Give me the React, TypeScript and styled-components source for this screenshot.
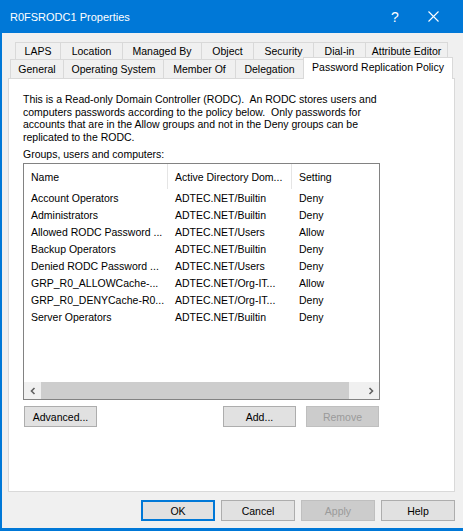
import styled, { createGlobalStyle } from 'styled-components';

const GlobalStyle = createGlobalStyle`
  html, body {
    margin: 0;
    padding: 0;
    background: #f0f0f0;
  }
  body {
    font-family: 'Liberation Sans', Arial, sans-serif;
    font-size: 10.5px;
    color: #000;
  }
`;

const Window = styled.div`
  box-sizing: border-box;
  width: 463px;
  height: 531px;
  display: flex;
  flex-direction: column;
  border-left: 2px solid #0078d7;
  border-bottom: 3px solid #0078d7;
  background: #f0f0f0;
  overflow: hidden;
`;

const TitleBar = styled.div`
  height: 33px;
  flex: none;
  display: flex;
  align-items: center;
  background: #0078d7;
  color: #fff;
  padding: 0 11px 0 8px;
  margin-left: -2px;
`;

const TitleText = styled.span`
  flex: 1;
  font-size: 11px;
  padding-left: 2px;
`;

const TitleButton = styled.div`
  width: 38px;
  height: 33px;
  display: flex;
  align-items: center;
  justify-content: center;
  font-size: 14px;
`;

const Body = styled.div`
  flex: 1;
  display: flex;
  flex-direction: column;
  padding: 9px 8px 0 6px;
`;

const TabRow = styled.div<{ $indent: number; $height: number }>`
  display: flex;
  align-items: flex-end;
  height: ${({ $height }) => $height}px;
  padding-left: ${({ $indent }) => $indent}px;
`;

const Tab = styled.div<{ $width: number; $active?: boolean }>`
  box-sizing: border-box;
  width: ${({ $width }) => $width}px;
  height: ${({ $active }) => ($active ? '22px' : '100%')};
  display: flex;
  align-items: center;
  justify-content: center;
  border: 1px solid #d9d9d9;
  border-bottom: none;
  margin-left: -1px;
  background: ${({ $active }) => ($active ? '#fff' : '#f0f0f0')};
  white-space: nowrap;
  position: relative;
  z-index: ${({ $active }) => ($active ? 2 : 1)};
  margin-bottom: ${({ $active }) => ($active ? '-1px' : '0')};
  padding-bottom: ${({ $active }) => ($active ? '3px' : '0')};
`;

const Panel = styled.div`
  box-sizing: border-box;
  height: 414px;
  flex: none;
  border: 1px solid #d9d9d9;
  background: #fff;
  padding: 14px 14px 0 14px;
  display: flex;
  flex-direction: column;
  align-items: flex-start;
`;

const Intro = styled.p`
  margin: 0 0 5px 0;
  line-height: 12.5px;
  white-space: pre;
`;

const Label = styled.div`
  line-height: 12px;
  margin-bottom: 3px;
`;

const ListView = styled.div`
  box-sizing: border-box;
  width: 357px;
  height: 237px;
  border: 1px solid #828282;
  display: flex;
  flex-direction: column;
`;

const HeaderRow = styled.div`
  display: flex;
  height: 25px;
  flex: none;
`;

const HeaderCell = styled.div<{ $width?: number }>`
  box-sizing: border-box;
  width: ${({ $width }) => ($width ? `${$width}px` : 'auto')};
  flex: ${({ $width }) => ($width ? 'none' : 1)};
  display: flex;
  align-items: center;
  padding-left: 7px;
  border-right: ${({ $width }) => ($width ? '1px solid #e5e5e5' : 'none')};
`;

const Rows = styled.div`
  flex: 1;
`;

const Row = styled.div`
  display: flex;
  height: 17px;
  align-items: center;
`;

const Cell = styled.div<{ $width?: number }>`
  box-sizing: border-box;
  width: ${({ $width }) => ($width ? `${$width}px` : 'auto')};
  flex: ${({ $width }) => ($width ? 'none' : 1)};
  padding-left: 7px;
  white-space: nowrap;
  overflow: hidden;
`;

const ScrollBar = styled.div`
  height: 17px;
  flex: none;
  display: flex;
  background: #f0f0f0;
`;

const ScrollArrow = styled.div`
  width: 17px;
  display: flex;
  align-items: center;
  justify-content: center;
`;

const ScrollTrack = styled.div`
  flex: 1;
  display: flex;
  padding-right: 13px;
`;

const ScrollThumb = styled.div`
  flex: 1;
  background: #cdcdcd;
`;

const ButtonRow = styled.div`
  width: 357px;
  display: flex;
  gap: 10px;
  margin-top: 6px;
  padding: 0 1px;
  box-sizing: border-box;
`;

const Spacer = styled.div`
  flex: 1;
`;

const Button = styled.div<{ $disabled?: boolean; $focused?: boolean; $width?: number }>`
  box-sizing: border-box;
  width: ${({ $width }) => $width ?? 73}px;
  height: 21px;
  display: flex;
  align-items: center;
  justify-content: center;
  background: ${({ $disabled }) => ($disabled ? '#cccccc' : '#e1e1e1')};
  color: ${({ $disabled }) => ($disabled ? '#9a9a9a' : '#000')};
  border: ${({ $focused, $disabled }) =>
    $focused ? '2px solid #0078d7' : $disabled ? '1px solid #bfbfbf' : '1px solid #adadad'};
`;

const Footer = styled.div`
  display: flex;
  justify-content: flex-end;
  gap: 6px;
  padding-top: 8px;
`;

const topTabs = [
  { label: 'LAPS', width: 46 },
  { label: 'Location', width: 63 },
  { label: 'Managed By', width: 80 },
  { label: 'Object', width: 53 },
  { label: 'Security', width: 61 },
  { label: 'Dial-in', width: 53 },
  { label: 'Attribute Editor', width: 83 },
];

const bottomTabs = [
  { label: 'General', width: 54 },
  { label: 'Operating System', width: 101 },
  { label: 'Member Of', width: 73 },
  { label: 'Delegation', width: 69 },
  { label: 'Password Replication Policy', width: 150, active: true },
];

const entries = [
  ['Account Operators', 'ADTEC.NET/Builtin', 'Deny'],
  ['Administrators', 'ADTEC.NET/Builtin', 'Deny'],
  ['Allowed RODC Password ...', 'ADTEC.NET/Users', 'Allow'],
  ['Backup Operators', 'ADTEC.NET/Builtin', 'Deny'],
  ['Denied RODC Password ...', 'ADTEC.NET/Users', 'Deny'],
  ['GRP_R0_ALLOWCache-...', 'ADTEC.NET/Org-IT...', 'Allow'],
  ['GRP_R0_DENYCache-R0...', 'ADTEC.NET/Org-IT...', 'Deny'],
  ['Server Operators', 'ADTEC.NET/Builtin', 'Deny'],
];

const intro =
  'This is a Read-only Domain Controller (RODC).  An RODC stores users and\n' +
  'computers passwords according to the policy below.  Only passwords for\n' +
  'accounts that are in the Allow groups and not in the Deny groups can be\n' +
  'replicated to the RODC.';

const Chevron = ({ dir }: { dir: 'left' | 'right' }) => (
  <svg width="8" height="8" viewBox="0 0 8 8">
    <polyline
      points={dir === 'left' ? '5.5,1 2.5,4 5.5,7' : '2.5,1 5.5,4 2.5,7'}
      fill="none"
      stroke="#606060"
      strokeWidth="1.6"
    />
  </svg>
);

const App = () => {
  return (
    <>
      <GlobalStyle />
      <Window>
        <TitleBar>
          <TitleText>R0FSRODC1 Properties</TitleText>
          <TitleButton>?</TitleButton>
          <TitleButton>
            <svg width="11" height="11" viewBox="0 0 11 11">
              <path d="M0.5 0.5 L10.5 10.5 M10.5 0.5 L0.5 10.5" stroke="#fff" strokeWidth="1.1" />
            </svg>
          </TitleButton>
        </TitleBar>
        <Body>
          <TabRow $indent={8} $height={17}>
            {topTabs.map((t) => (
              <Tab key={t.label} $width={t.width}>
                {t.label}
              </Tab>
            ))}
          </TabRow>
          <TabRow $indent={3} $height={19}>
            {bottomTabs.map((t) => (
              <Tab key={t.label} $width={t.width} $active={t.active}>
                {t.label}
              </Tab>
            ))}
          </TabRow>
          <Panel>
            <Intro>{intro}</Intro>
            <Label>Groups, users and computers:</Label>
            <ListView>
              <HeaderRow>
                <HeaderCell $width={144}>Name</HeaderCell>
                <HeaderCell $width={124}>Active Directory Dom...</HeaderCell>
                <HeaderCell>Setting</HeaderCell>
              </HeaderRow>
              <Rows>
                {entries.map(([name, path, setting]) => (
                  <Row key={name}>
                    <Cell $width={144}>{name}</Cell>
                    <Cell $width={124}>{path}</Cell>
                    <Cell>{setting}</Cell>
                  </Row>
                ))}
              </Rows>
              <ScrollBar>
                <ScrollArrow>
                  <Chevron dir="left" />
                </ScrollArrow>
                <ScrollTrack>
                  <ScrollThumb />
                </ScrollTrack>
                <ScrollArrow>
                  <Chevron dir="right" />
                </ScrollArrow>
              </ScrollBar>
            </ListView>
            <ButtonRow>
              <Button>Advanced...</Button>
              <Spacer />
              <Button>Add...</Button>
              <Button $disabled>Remove</Button>
            </ButtonRow>
          </Panel>
          <Footer>
            <Button $width={74} $focused>
              OK
            </Button>
            <Button $width={74}>Cancel</Button>
            <Button $width={74} $disabled>
              Apply
            </Button>
            <Button $width={74}>Help</Button>
          </Footer>
        </Body>
      </Window>
    </>
  );
};

export default App;
